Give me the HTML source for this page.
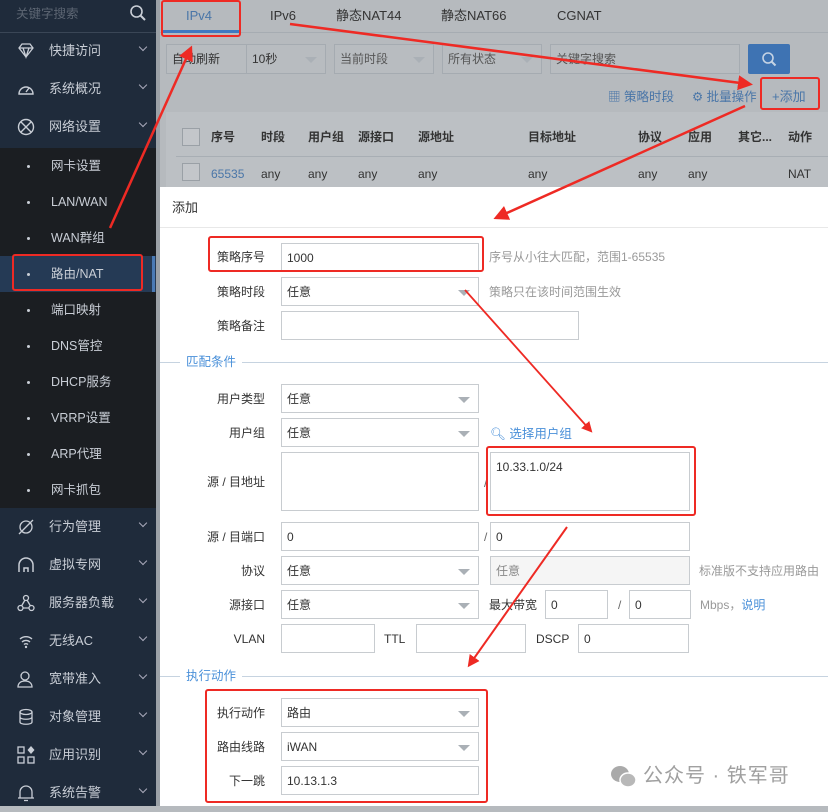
<!DOCTYPE html>
<html><head><meta charset="utf-8"><style>
*{margin:0;padding:0;box-sizing:border-box}
body{width:828px;height:806px;overflow:hidden;position:relative;font-family:"Liberation Sans","Noto Sans CJK SC",sans-serif;font-size:12px;line-height:17px;color:#333;background:#b6babe}
.a{position:absolute}
#side{left:0;top:0;width:156px;height:806px;background:#1f2b3b}
#strip{left:156px;top:0;width:4px;height:806px;background:#9ba1a7}
.mi{position:absolute;left:0;width:156px;height:38px;color:#c9ced6;font-size:13px}
.mi span{position:absolute;left:49px;top:10px}
.mi i{position:absolute;left:140px;top:12px;width:6px;height:6px;border-right:1.5px solid #aab;border-bottom:1.5px solid #aab;transform:rotate(45deg)}
.mi svg{position:absolute;left:17px;top:10px}
#sub{left:0;top:148px;width:156px;height:360px;background:#1b1e22}
.si{position:absolute;left:0;width:156px;height:36px;color:#c9ced6;font-size:12.5px}
.si b{position:absolute;left:27px;top:17px;width:3px;height:3px;background:#c9ced6;border-radius:50%}
.si span{position:absolute;left:51px;top:9px;line-height:18px}
.red{position:absolute;border:2.5px solid #ee2a24;border-radius:3px}
.in{position:absolute;border:1px solid #c8ccd0;background:#fff;height:29px;font-size:12px;padding:6px 5px;color:#333}
.dd:after{content:"";position:absolute;right:8px;top:12px;border-left:6px solid transparent;border-right:6px solid transparent;border-top:6px solid #aab0b6}
.lb{position:absolute;width:105px;text-align:right;left:160px;font-size:12px;color:#333;margin-top:-1px}
.tip{position:absolute;color:#999;font-size:12px;margin-top:-1px}
.sec{position:absolute;left:160px;width:668px;height:1px;background:#c6d3e0}
.sect{position:absolute;left:180px;background:#fff;padding:0 6px;color:#4a90d9;font-size:12.5px}
.th{position:absolute;top:129px;font-size:12px;color:#333;font-weight:bold}
.td{position:absolute;top:166px;font-size:12px;color:#333}
.tb{position:absolute;border:1px solid #a5abb1;background:#b8bcc0;height:30px;top:44px;color:#555;font-size:12px;padding:6px 5px}
</style></head><body>
<div class="a" id="side"></div>
<div class="a" id="strip"></div>
<div class="a" style="left:16px;top:6px;color:#5d6673;font-size:12.5px">关键字搜索</div>
<svg class="a" style="left:129px;top:4px" width="18" height="18"><circle cx="7.5" cy="7.5" r="5.5" fill="none" stroke="#c9ced6" stroke-width="1.6"/><path d="M11.5 11.5l4.5 4.5" stroke="#c9ced6" stroke-width="2"/></svg>
<div class="a" style="left:0;top:32px;width:156px;height:1px;background:#3a4656"></div>
<div class="mi" style="top:32px"><svg width="18" height="18"><path d="M2 6l3-4h8l3 4-7 9z M2 6h14 M6 6l3 9 3-9" fill="none" stroke="#c9ced6" stroke-width="1.3"/></svg><span>快捷访问</span><i></i></div>
<div class="mi" style="top:70px"><svg width="18" height="18"><path d="M2 14a7 7 0 1 1 14 0z M9 12l3-4" fill="none" stroke="#c9ced6" stroke-width="1.4"/></svg><span>系统概况</span><i></i></div>
<div class="mi" style="top:108px"><svg width="18" height="18"><circle cx="9" cy="9" r="7.5" fill="none" stroke="#c9ced6" stroke-width="1.4"/><path d="M4 4l10 10M14 4L4 14" stroke="#c9ced6" stroke-width="1.4"/></svg><span>网络设置</span><i></i></div>
<div class="a" id="sub"></div>
<div class="si" style="top:148px"><b></b><span>网卡设置</span></div>
<div class="si" style="top:184px"><b></b><span>LAN/WAN</span></div>
<div class="si" style="top:220px"><b></b><span>WAN群组</span></div>
<div class="si" style="top:256px;background:#253a55"><b></b><span>路由/NAT</span></div>
<div class="a" style="left:152px;top:256px;width:3px;height:36px;background:#4a7ab5"></div>
<div class="si" style="top:292px"><b></b><span>端口映射</span></div>
<div class="si" style="top:328px"><b></b><span>DNS管控</span></div>
<div class="si" style="top:364px"><b></b><span>DHCP服务</span></div>
<div class="si" style="top:400px"><b></b><span>VRRP设置</span></div>
<div class="si" style="top:436px"><b></b><span>ARP代理</span></div>
<div class="si" style="top:472px"><b></b><span>网卡抓包</span></div>
<div class="mi" style="top:508px"><svg width="18" height="18"><circle cx="9" cy="9" r="6" fill="none" stroke="#c9ced6" stroke-width="1.3"/><path d="M2 16L16 2" stroke="#c9ced6" stroke-width="1.3"/></svg><span>行为管理</span><i></i></div>
<div class="mi" style="top:546px"><svg width="18" height="18"><path d="M2 16V9a7 7 0 0 1 14 0v7 M7 16v-4h4v4" fill="none" stroke="#c9ced6" stroke-width="1.5"/></svg><span>虚拟专网</span><i></i></div>
<div class="mi" style="top:584px"><svg width="18" height="18"><circle cx="9" cy="4" r="2.5" fill="none" stroke="#c9ced6" stroke-width="1.3"/><circle cx="3.5" cy="14" r="2.5" fill="none" stroke="#c9ced6" stroke-width="1.3"/><circle cx="14.5" cy="14" r="2.5" fill="none" stroke="#c9ced6" stroke-width="1.3"/><path d="M8 6l-3.5 6M10 6l3.5 6M6 14h6" stroke="#c9ced6" stroke-width="1.3"/></svg><span>服务器负载</span><i></i></div>
<div class="mi" style="top:622px"><svg width="18" height="18"><path d="M3 7a9 9 0 0 1 12 0M5 10a6 6 0 0 1 8 0M7 12.5a3 3 0 0 1 4 0" fill="none" stroke="#c9ced6" stroke-width="1.4"/><circle cx="9" cy="15" r="1.2" fill="#c9ced6"/></svg><span>无线AC</span><i></i></div>
<div class="mi" style="top:660px"><svg width="18" height="18"><circle cx="8" cy="6" r="4" fill="none" stroke="#c9ced6" stroke-width="1.3"/><path d="M1 17c0-4 3-6 7-6s7 2 7 6z" fill="none" stroke="#c9ced6" stroke-width="1.3"/></svg><span>宽带准入</span><i></i></div>
<div class="mi" style="top:698px"><svg width="18" height="18"><ellipse cx="9" cy="4" rx="6" ry="2.5" fill="none" stroke="#c9ced6" stroke-width="1.3"/><path d="M3 4v10c0 3 12 3 12 0V4M3 9c0 3 12 3 12 0" fill="none" stroke="#c9ced6" stroke-width="1.3"/></svg><span>对象管理</span><i></i></div>
<div class="mi" style="top:736px"><svg width="18" height="18"><rect x="1" y="1" width="6" height="6" fill="none" stroke="#c9ced6" stroke-width="1.3"/><rect x="1" y="11" width="6" height="6" fill="none" stroke="#c9ced6" stroke-width="1.3"/><rect x="11" y="11" width="6" height="6" fill="none" stroke="#c9ced6" stroke-width="1.3"/><path d="M14 0l3.5 4-3.5 4-3.5-4z" fill="#c9ced6"/></svg><span>应用识别</span><i></i></div>
<div class="mi" style="top:774px"><svg width="18" height="18"><path d="M3 14V8a6 6 0 0 1 12 0v6zM1 14h16M7 16.5h4" fill="none" stroke="#c9ced6" stroke-width="1.3"/></svg><span>系统告警</span><i></i></div>

<div class="a" style="left:160px;top:0;width:668px;height:33px;background:#b6babe;border-bottom:1px solid #a6acb2"></div>
<div class="a" style="left:186px;top:7px;color:#4a76a8;font-size:13px">IPv4</div>
<div class="a" style="left:163px;top:30px;width:77px;height:3px;background:#3f78c0"></div>
<div class="a" style="left:270px;top:7px;font-size:13px">IPv6</div>
<div class="a" style="left:336px;top:7px;font-size:13px">静态NAT44</div>
<div class="a" style="left:441px;top:7px;font-size:13px">静态NAT66</div>
<div class="a" style="left:557px;top:7px;font-size:13px">CGNAT</div>
<div class="tb" style="left:166px;width:81px;color:#333">自动刷新</div>
<div class="tb dd" style="left:246px;width:80px;color:#333">10秒</div>
<div class="tb dd" style="left:334px;width:100px">当前时段</div>
<div class="tb dd" style="left:442px;width:100px">所有状态</div>
<div class="tb" style="left:550px;width:190px">关键字搜索</div>
<div class="a" style="left:748px;top:44px;width:42px;height:30px;background:#3e73b3;border-radius:2px"></div>
<svg class="a" style="left:760px;top:50px" width="18" height="18"><circle cx="8" cy="8" r="5" fill="none" stroke="#c5d3e4" stroke-width="1.6"/><path d="M11.5 11.5l4 4" stroke="#c5d3e4" stroke-width="2"/></svg>
<div class="a" style="left:608px;top:89px;color:#4a76a8;font-size:12.5px">▦ 策略时段</div>
<div class="a" style="left:692px;top:89px;color:#4a76a8;font-size:12.5px">⚙ 批量操作</div>
<div class="a" style="left:772px;top:88px;color:#4a76a8;font-size:13px">+添加</div>
<div class="a" style="left:166px;top:112px;width:662px;height:80px;background:#bcc0c4"></div>
<div class="a" style="left:182px;top:128px;width:18px;height:18px;border:1px solid #9aa0a6;background:#c3c6ca"></div>
<div class="a" style="left:182px;top:163px;width:18px;height:18px;border:1px solid #9aa0a6;background:#c3c6ca"></div>
<div class="a" style="left:176px;top:156px;width:652px;height:1px;background:#a8aeb4"></div>
<div class="th" style="left:211px">序号</div><div class="th" style="left:261px">时段</div><div class="th" style="left:308px">用户组</div><div class="th" style="left:358px">源接口</div><div class="th" style="left:418px">源地址</div><div class="th" style="left:528px">目标地址</div><div class="th" style="left:638px">协议</div><div class="th" style="left:688px">应用</div><div class="th" style="left:738px">其它...</div><div class="th" style="left:788px">动作</div>
<div class="td" style="left:211px;color:#4a76a8">65535</div><div class="td" style="left:261px">any</div><div class="td" style="left:308px">any</div><div class="td" style="left:358px">any</div><div class="td" style="left:418px">any</div><div class="td" style="left:528px">any</div><div class="td" style="left:638px">any</div><div class="td" style="left:688px">any</div><div class="td" style="left:788px">NAT</div>

<div class="a" style="left:160px;top:187px;width:668px;height:619px;background:#fff"></div>
<div class="a" style="left:172px;top:199px;font-size:13px;color:#333">添加</div>
<div class="a" style="left:160px;top:227px;width:668px;height:1px;background:#e8e8e8"></div>

<div class="lb" style="top:250px">策略序号</div><div class="in" style="left:281px;top:243px;width:198px">1000</div><div class="tip" style="left:489px;top:250px">序号从小往大匹配，范围1-65535</div>
<div class="lb" style="top:285px">策略时段</div><div class="in dd" style="left:281px;top:277px;width:198px">任意</div><div class="tip" style="left:489px;top:285px">策略只在该时间范围生效</div>
<div class="lb" style="top:319px">策略备注</div><div class="in" style="left:281px;top:311px;width:298px"></div>
<div class="sec" style="top:362px"></div><div class="sect" style="top:354px">匹配条件</div>
<div class="lb" style="top:392px">用户类型</div><div class="in dd" style="left:281px;top:384px;width:198px">任意</div>
<div class="lb" style="top:426px">用户组</div><div class="in dd" style="left:281px;top:418px;width:198px">任意</div>
<div class="a" style="left:490px;top:426px;color:#4a90d9;font-size:12.5px">🔍︎ 选择用户组</div>
<div class="lb" style="top:475px">源 / 目地址</div><div class="in" style="left:281px;top:452px;width:198px;height:59px"></div><div class="a" style="left:484px;top:475px;color:#666">/</div><div class="in" style="left:490px;top:452px;width:200px;height:59px">10.33.1.0/24</div>
<div class="lb" style="top:530px">源 / 目端口</div><div class="in" style="left:281px;top:522px;width:198px">0</div><div class="a" style="left:484px;top:529px;color:#666">/</div><div class="in" style="left:490px;top:522px;width:200px">0</div>
<div class="lb" style="top:564px">协议</div><div class="in dd" style="left:281px;top:556px;width:198px">任意</div><div class="in" style="left:490px;top:556px;width:200px;background:#f5f5f5;color:#888">任意</div><div class="tip" style="left:699px;top:564px">标准版不支持应用路由</div>
<div class="lb" style="top:598px">源接口</div><div class="in dd" style="left:281px;top:590px;width:198px">任意</div><div class="a" style="left:489px;top:597px">最大带宽</div><div class="in" style="left:545px;top:590px;width:63px">0</div><div class="a" style="left:618px;top:597px;color:#666">/</div><div class="in" style="left:629px;top:590px;width:62px">0</div><div class="tip" style="left:700px;top:598px">Mbps，<span style="color:#4a90d9">说明</span></div>
<div class="lb" style="top:632px">VLAN</div><div class="in" style="left:281px;top:624px;width:94px"></div><div class="a" style="left:384px;top:631px">TTL</div><div class="in" style="left:416px;top:624px;width:110px"></div><div class="a" style="left:536px;top:631px">DSCP</div><div class="in" style="left:578px;top:624px;width:111px">0</div>
<div class="sec" style="top:676px"></div><div class="sect" style="top:668px">执行动作</div>
<div class="lb" style="top:706px">执行动作</div><div class="in dd" style="left:281px;top:698px;width:198px">路由</div>
<div class="lb" style="top:740px">路由线路</div><div class="in dd" style="left:281px;top:732px;width:198px">iWAN</div>
<div class="lb" style="top:774px">下一跳</div><div class="in" style="left:281px;top:766px;width:198px">10.13.1.3</div>

<svg class="a" style="left:610px;top:764px" width="28" height="26"><ellipse cx="10" cy="10" rx="9" ry="8" fill="#aaa"/><ellipse cx="18" cy="16" rx="8" ry="7" fill="#b8b8b8" stroke="#fff" stroke-width="1.5"/></svg>
<div class="a" style="left:643px;top:763px;color:#a0a0a0;font-size:20px;line-height:26px;letter-spacing:1px">公众号 · 铁军哥</div>

<div class="red" style="left:161px;top:0;width:80px;height:37px"></div>
<div class="red" style="left:12px;top:254px;width:131px;height:37px"></div>
<div class="red" style="left:760px;top:77px;width:60px;height:33px"></div>
<div class="red" style="left:208px;top:236px;width:276px;height:36px"></div>
<div class="red" style="left:486px;top:446px;width:210px;height:70px"></div>
<div class="red" style="left:205px;top:689px;width:283px;height:114px"></div>

<svg class="a" style="left:0;top:0" width="828" height="806">
<defs><marker id="h" markerWidth="6" markerHeight="6" refX="4" refY="3" orient="auto"><path d="M0 0L6 3L0 6z" fill="#ee2a24"/></marker></defs>
<g stroke="#ee2a24" fill="none" marker-end="url(#h)">
<line x1="110" y1="228" x2="190" y2="50" stroke-width="2.5"/>
<line x1="290" y1="24" x2="748" y2="84" stroke-width="2.5"/>
<line x1="745" y1="106" x2="498" y2="217" stroke-width="2.5"/>
<line x1="465" y1="290" x2="590" y2="430" stroke-width="1.8"/>
<line x1="567" y1="527" x2="470" y2="664" stroke-width="2"/>
</g></svg>
</body></html>
